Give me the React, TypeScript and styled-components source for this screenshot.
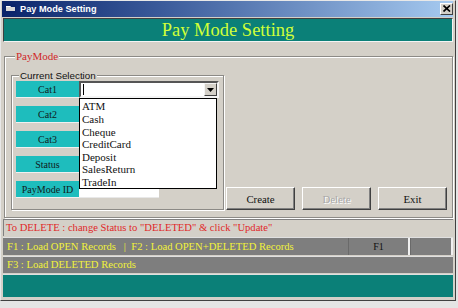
import React from 'react';
import styled, { createGlobalStyle } from 'styled-components';

const Global = createGlobalStyle`
  html, body { margin: 0; padding: 0; }
  body {
    width: 458px; height: 308px; overflow: hidden;
    background: #e4e4e4;
    font-family: "Liberation Serif", serif;
  }
`;

const Window = styled.div`
  position: relative;
  width: 456px;
  height: 301px;
  box-sizing: border-box;
  background: #d4d0c8;
  border: 1px solid;
  border-color: #e8e8e8 #404040 #404040 #e8e8e8;
  padding: 0 2px 3px 1px;
  display: flex;
  flex-direction: column;
`;

const TitleBar = styled.div`
  height: 16px;
  display: flex;
  align-items: center;
  gap: 4px;
  padding: 0 0 0 3px;
  background: linear-gradient(to right, #0a246a 0%, #3a5a9a 35%, #a6caf0 100%);
`;

const TitleText = styled.span`
  flex: 1;
  color: #fff;
  font-family: "Liberation Sans", sans-serif;
  font-weight: bold;
  font-size: 9.2px;
`;

const CloseBtn = styled.div`
  width: 13px;
  height: 12px;
  box-sizing: border-box;
  background: #d4d0c8;
  border: 1px solid;
  border-color: #fff #404040 #404040 #fff;
  display: flex;
  align-items: center;
  justify-content: center;
`;

const Header = styled.div`
  margin: 1px 0 0 1px;
  height: 25px;
  box-sizing: border-box;
  background: #0b8078;
  border: 1px solid;
  border-color: #404040 #f4f4f4 #f4f4f4 #404040;
  display: flex;
  align-items: center;
  justify-content: center;
  color: #d0ff38;
  font-size: 18.5px;
  font-family: "Liberation Serif", serif;
  padding-top: 1px;
`;

const Frame = styled.fieldset`
  margin: 8px 0 0 2px;
  padding: 8px 4px 7px 6px;
  height: 170px;
  box-sizing: border-box;
  min-inline-size: 0;
  border: 1px solid #8c8a86;
  box-shadow: inset 1px 1px 0 #fff, 1px 1px 0 #fff;
  display: flex;
  justify-content: space-between;
`;

const Legend = styled.legend<{ $red?: boolean }>`
  padding: 0 1px;
  margin-left: ${p => (p.$red ? '4px' : '3px')};
  background: #d4d0c8;
  color: ${p => (p.$red ? '#d02828' : '#111')};
  font-family: ${p => (p.$red ? '"Liberation Serif", serif' : '"Liberation Sans", sans-serif')};
  font-size: ${p => (p.$red ? '11px' : '9.8px')};
  line-height: ${p => (p.$red ? '12px' : '11px')};
`;

const SelectionSet = styled.fieldset`
  margin: 0;
  padding: 0 4px 9px 4px;
  width: 213px;
  box-sizing: border-box;
  min-inline-size: 0;
  border: 1px solid #8c8a86;
  box-shadow: inset 1px 1px 0 #fff, 1px 1px 0 #fff;
  display: flex;
  flex-direction: column;
  gap: 8px;
`;

const Row = styled.div`
  position: relative;
  display: flex;
  height: 17px;
`;

const FieldLabel = styled.div`
  width: 63px;
  box-sizing: border-box;
  background: #1ebdbd;
  border-bottom: 1px solid #f0f0f0;
  display: flex;
  align-items: center;
  justify-content: center;
  font-size: 10px;
  color: #102020;
`;

const Combo = styled.div`
  width: 140px;
  box-sizing: border-box;
  background: #fff;
  border: 2px solid;
  border-color: #555 #f4f4f4 #f4f4f4 #555;
  display: flex;
  align-items: center;
  justify-content: space-between;
  padding-left: 2px;
`;

const Caret = styled.div`
  width: 1px;
  height: 11px;
  background: #000;
`;

const DropBtn = styled.div`
  width: 13px;
  height: 13px;
  box-sizing: border-box;
  background: #d4d0c8;
  border: 1px solid;
  border-color: #f4f4f4 #404040 #404040 #f4f4f4;
  display: flex;
  align-items: center;
  justify-content: center;
`;

const DropList = styled.ul`
  position: absolute;
  left: 63px;
  top: 17px;
  width: 138px;
  height: 91px;
  box-sizing: border-box;
  margin: 0;
  padding: 1px 0 0 2px;
  list-style: none;
  background: #fff;
  border: 1px solid #000;
  z-index: 2;
`;

const DropItem = styled.li`
  height: 12.6px;
  line-height: 12.6px;
  font-size: 11px;
  color: #111;
`;

const TextBox = styled.div<{ $w: number }>`
  width: ${p => p.$w}px;
  background: #fff;
  border-bottom: 1px solid #e8e8e8;
`;

const ButtonRow = styled.div`
  align-self: flex-end;
  display: flex;
  gap: 7px;
  margin-right: 1px;
`;

const Btn = styled.div<{ $disabled?: boolean }>`
  width: 69px;
  height: 23px;
  box-sizing: border-box;
  background: #d4d0c8;
  border: 1px solid;
  border-color: #fff #404040 #404040 #fff;
  box-shadow: inset -1px -1px 0 #808080;
  display: flex;
  align-items: center;
  justify-content: center;
  font-size: 10.8px;
  color: ${p => (p.$disabled ? '#a8a8a8' : '#111')};
  text-shadow: ${p => (p.$disabled ? '1px 1px 0 #fff' : 'none')};
`;

const Message = styled.div`
  margin: 1px 0 0 1px;
  height: 17px;
  box-sizing: border-box;
  border-top: 1px solid #808080;
  border-left: 1px solid #808080;
  padding-left: 2px;
  display: flex;
  align-items: center;
  color: #e02828;
  font-size: 10.6px;
  white-space: pre;
`;

const StatusBar = styled.div`
  margin: 1px 0 0 1px;
  height: 18px;
  box-sizing: border-box;
  background: #7e7e7e;
  border-top: 1px solid #e0e0e0;
  display: flex;
  align-items: stretch;
`;

const StatusText = styled.div`
  flex: 1;
  padding-left: 4px;
  display: flex;
  align-items: center;
  color: #f2f23a;
  font-size: 10.6px;
  white-space: pre;
`;

const StatusPanel = styled.div<{ $w: number }>`
  width: ${p => p.$w}px;
  box-sizing: border-box;
  border-right: 2px solid #f0f0f0;
  border-left: 1px solid #6a6a6a;
  display: flex;
  align-items: center;
  justify-content: center;
  color: #111;
  font-size: 10px;
`;

const Footer = styled.div`
  margin: 1px 0 0 1px;
  height: 22px;
  background: #0b8078;
  border-top: 1px solid #e0e0e0;
`;

const items = ['ATM', 'Cash', 'Cheque', 'CreditCard', 'Deposit', 'SalesReturn', 'TradeIn'];

export default function App() {
  return (
    <>
      <Global />
      <Window>
        <TitleBar>
          <svg width="11" height="9" viewBox="0 0 11 9">
            <rect x="0" y="0" width="11" height="9" fill="#0a246a" />
            <path d="M1 2h4l1 1h4v4H1z" fill="#d8d8d8" />
            <path d="M1 2h4l1 1H1z" fill="#fff" />
          </svg>
          <TitleText>Pay Mode Setting</TitleText>
          <CloseBtn>
            <svg width="8" height="7" viewBox="0 0 8 7">
              <path d="M0.5 0.5L7 6.5M7 0.5L0.5 6.5" stroke="#000" strokeWidth="1.7" />
            </svg>
          </CloseBtn>
        </TitleBar>
        <Header>Pay Mode Setting</Header>
        <Frame>
          <Legend $red>PayMode</Legend>
          <SelectionSet>
            <Legend>Current Selection</Legend>
            <Row>
              <FieldLabel>Cat1</FieldLabel>
              <Combo>
                <Caret />
                <DropBtn>
                  <svg width="7" height="4" viewBox="0 0 7 4">
                    <path d="M0 0h7L3.5 4z" fill="#000" />
                  </svg>
                </DropBtn>
              </Combo>
              <DropList>
                {items.map(i => (
                  <DropItem key={i}>{i}</DropItem>
                ))}
              </DropList>
            </Row>
            <Row>
              <FieldLabel>Cat2</FieldLabel>
              <TextBox $w={130} />
            </Row>
            <Row>
              <FieldLabel>Cat3</FieldLabel>
              <TextBox $w={130} />
            </Row>
            <Row>
              <FieldLabel>Status</FieldLabel>
              <TextBox $w={80} />
            </Row>
            <Row>
              <FieldLabel>PayMode ID</FieldLabel>
              <TextBox $w={80} />
            </Row>
          </SelectionSet>
          <ButtonRow>
            <Btn>Create</Btn>
            <Btn $disabled>Delete</Btn>
            <Btn>Exit</Btn>
          </ButtonRow>
        </Frame>
        <Message>To DELETE : change Status to "DELETED" &amp; click "Update"</Message>
        <StatusBar>
          <StatusText>F1 : Load OPEN Records   |  F2 : Load OPEN+DELETED Records</StatusText>
          <StatusPanel $w={62}>F1</StatusPanel>
          <StatusPanel $w={43} />
        </StatusBar>
        <StatusBar>
          <StatusText>F3 : Load DELETED Records</StatusText>
        </StatusBar>
        <Footer />
      </Window>
    </>
  );
}
